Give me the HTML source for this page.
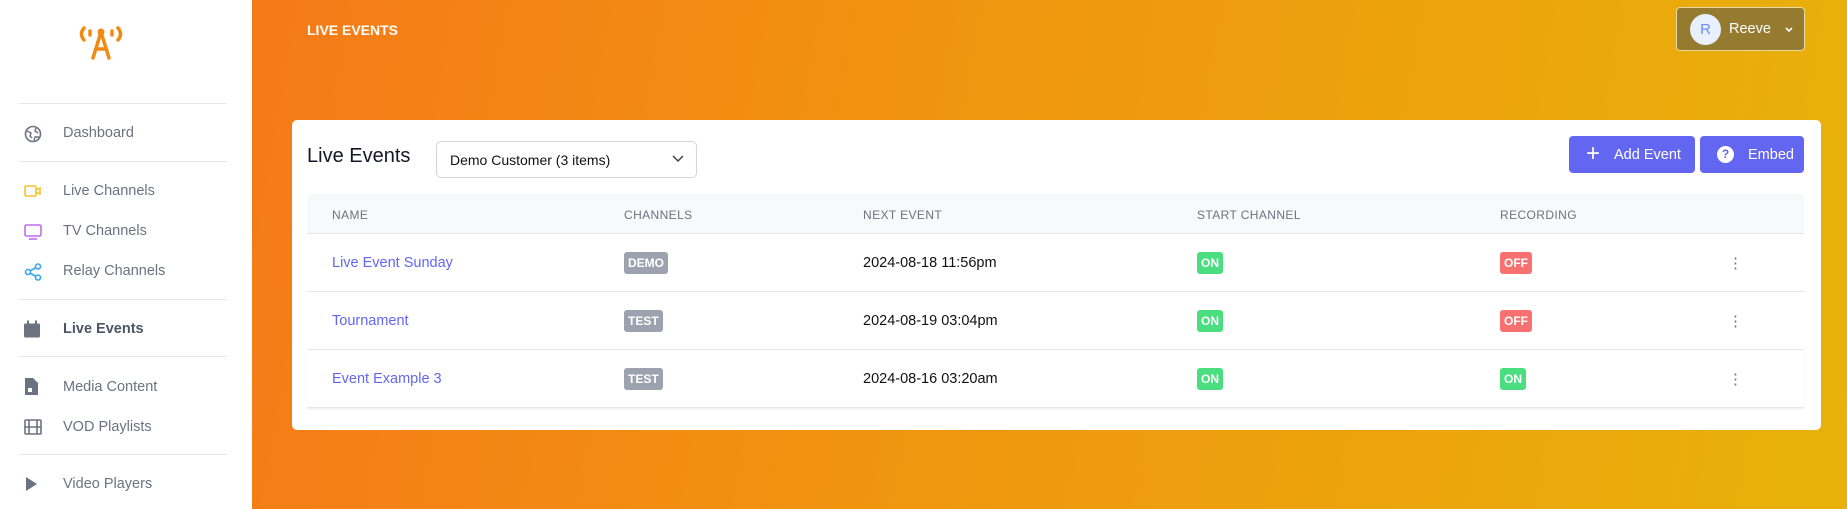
<!DOCTYPE html>
<html><head><meta charset="utf-8"><style>
*{box-sizing:border-box;margin:0;padding:0}
body{width:1847px;height:509px;overflow:hidden;font-family:"Liberation Sans",sans-serif;background:linear-gradient(100deg,#f8701c 0%,#f0950f 50%,#e8b20a 100%);position:relative}
.sb{position:absolute;left:0;top:0;width:252px;height:509px;background:#fff}
.hr{position:absolute;left:19px;width:208px;height:1px;background:#e5e7eb}
.ni{position:absolute;left:63px;font-size:14.5px;color:#6b7280;transform:translateY(-50%)}
.ic{position:absolute;left:24px;transform:translateY(-50%)}
.card{position:absolute;left:292px;top:120px;width:1529px;height:310px;background:#fff;border-radius:5px}
.th{position:absolute;top:74px;height:40px;left:15px;width:1497px;background:#f8f9fa;border-bottom:1px solid #e5e7eb}
.th span{position:absolute;top:14px;font-size:12px;color:#6b7280;letter-spacing:.4px}
.row{position:absolute;left:15px;width:1497px;height:58px;border-bottom:1px solid #e5e7eb}
.row>*{position:absolute;top:50%;transform:translateY(-50%)}
.nm{left:25px;color:#6366f1;font-size:14.5px}
.bd{font-size:12px;color:#fff;padding:4px 4px;border-radius:3px;font-weight:bold}
.dt{left:556px;font-size:14.5px;color:#111}
.btn{position:absolute;top:16px;height:37px;background:#6366f1;border-radius:4px;color:#fff;font-size:14.5px;display:flex;align-items:center}
</style></head><body>
<div class="sb">
<svg style="position:absolute;left:78px;top:24px" width="46" height="36" viewBox="0 0 46 36"><g fill="none" stroke="#f08a12" stroke-width="3.5" stroke-linecap="round"><path d="M6 4Q1 10 6 16"/><path d="M40 4Q45 10 40 16"/><path d="M12 7v4"/><path d="M34 7v4"/><path d="M23 8L15 34M23 8L31 34M18 25h10"/></g><circle cx="23" cy="8" r="3.5" fill="#f08a12"/></svg>
<div class="hr" style="top:103px"></div><div class="hr" style="top:161px"></div><div class="hr" style="top:299px"></div><div class="hr" style="top:356px"></div><div class="hr" style="top:454px"></div>
<svg class="ic" style="top:134px" width="18" height="18" viewBox="0 0 18 18"><circle cx="9" cy="9" r="7.5" fill="none" stroke="#6b7280" stroke-width="1.6"/><path d="M3 6l4 2-1 3 2 2M12 3l-1 3 3 2M10 16l1-4 4 0" fill="none" stroke="#6b7280" stroke-width="1.4"/></svg>
<div class="ni" style="top:133px">Dashboard</div>
<svg class="ic" style="top:191px" width="18" height="14" viewBox="0 0 18 14"><rect x="1" y="2" width="11" height="10" rx="1" fill="none" stroke="#f4c430" stroke-width="1.6"/><path d="M12 6l4-2v6l-4-2" fill="none" stroke="#f4c430" stroke-width="1.6"/></svg>
<div class="ni" style="top:191px">Live Channels</div>
<svg class="ic" style="top:232px" width="18" height="16" viewBox="0 0 18 16"><rect x="1" y="1" width="16" height="11" rx="1.5" fill="none" stroke="#c06af5" stroke-width="1.6"/><path d="M5 15h8" stroke="#c06af5" stroke-width="1.6"/></svg>
<div class="ni" style="top:231px">TV Channels</div>
<svg class="ic" style="top:272px" width="18" height="18" viewBox="0 0 18 18"><g fill="none" stroke="#38a8e8" stroke-width="1.6"><circle cx="4" cy="9" r="2.5"/><circle cx="14" cy="3.5" r="2.5"/><circle cx="14" cy="14.5" r="2.5"/><path d="M6 8l6-3.5M6 10l6 3.5"/></g></svg>
<div class="ni" style="top:271px">Relay Channels</div>
<svg class="ic" style="top:329px" width="16" height="17" viewBox="0 0 16 17"><rect x="0" y="3" width="16" height="14" rx="1.5" fill="#6b7280"/><rect x="3" y="0" width="2" height="4" fill="#6b7280"/><rect x="11" y="0" width="2" height="4" fill="#6b7280"/></svg>
<div class="ni" style="top:329px;font-weight:bold;color:#4b5563">Live Events</div>
<svg class="ic" style="top:387px" width="14" height="18" viewBox="0 0 14 18"><path d="M1 0h8l5 5v12H1z" fill="#6b7280"/><rect x="4" y="10" width="4" height="4" fill="#fff"/></svg>
<div class="ni" style="top:387px">Media Content</div>
<svg class="ic" style="top:427px" width="18" height="16" viewBox="0 0 18 16"><rect x="1" y="1" width="16" height="14" rx="1" fill="none" stroke="#6b7280" stroke-width="1.6"/><path d="M5 1v14M13 1v14M1 8h16" stroke="#6b7280" stroke-width="1.6"/></svg>
<div class="ni" style="top:427px">VOD Playlists</div>
<svg class="ic" style="top:484px" width="14" height="16" viewBox="0 0 14 16"><path d="M2 1l11 7-11 7z" fill="#6b7280"/></svg>
<div class="ni" style="top:484px">Video Players</div>
</div>
<div style="position:absolute;left:307px;top:22px;font-size:14px;font-weight:bold;color:#fff">LIVE EVENTS</div>
<div style="position:absolute;left:1676px;top:7px;width:129px;height:44px;border:1px solid #e8d9a0;border-radius:4px;background:#957b30">
<div style="position:absolute;left:13px;top:6px;width:31px;height:31px;border-radius:50%;background:#e8f0fe;color:#6b8cf0;font-size:15px;text-align:center;line-height:31px">R</div>
<div style="position:absolute;left:52px;top:13px;color:#fff;font-size:14.5px">Reeve</div>
<svg style="position:absolute;left:107px;top:18px" width="10" height="8" viewBox="0 0 10 8"><path d="M2 2l3 3 3-3" fill="none" stroke="#fff" stroke-width="1.6"/></svg>
</div>
<div class="card">
<div style="position:absolute;left:15px;top:25px;font-size:20px;color:#111827">Live Events</div>
<div style="position:absolute;left:144px;top:21px;width:261px;height:37px;border:1px solid #d1d5db;border-radius:5px">
<span style="position:absolute;left:13px;top:10px;font-size:14px;color:#111">Demo Customer (3 items)</span>
<svg style="position:absolute;right:12px;top:13px" width="12" height="8" viewBox="0 0 12 8"><path d="M1 1l5 5 5-5" fill="none" stroke="#444" stroke-width="1.5"/></svg>
</div>
<div class="btn" style="left:1277px;width:126px"><span style="font-size:24px;font-weight:300;margin:0 14px 2px 17px">+</span>Add Event</div>
<div class="btn" style="left:1408px;width:104px"><span style="width:17px;height:17px;border-radius:50%;background:#fff;color:#6366f1;font-size:12px;font-weight:bold;text-align:center;line-height:17px;margin:0 14px 0 17px">?</span>Embed</div>
<div class="th"><span style="left:25px">NAME</span><span style="left:317px">CHANNELS</span><span style="left:556px">NEXT EVENT</span><span style="left:890px">START CHANNEL</span><span style="left:1193px">RECORDING</span></div>
<div class="row" style="top:114px"><span class="nm">Live Event Sunday</span><span class="bd" style="left:317px;background:#9ca3af">DEMO</span><span class="dt">2024-08-18 11:56pm</span><span class="bd" style="left:890px;background:#4ade80">ON</span><span class="bd" style="left:1193px;background:#f87171">OFF</span><span style="left:1421px;color:#6b7280;font-size:15px">⋮</span></div>
<div class="row" style="top:172px"><span class="nm">Tournament</span><span class="bd" style="left:317px;background:#9ca3af">TEST</span><span class="dt">2024-08-19 03:04pm</span><span class="bd" style="left:890px;background:#4ade80">ON</span><span class="bd" style="left:1193px;background:#f87171">OFF</span><span style="left:1421px;color:#6b7280;font-size:15px">⋮</span></div>
<div class="row" style="top:230px;box-shadow:0 1px 2px rgba(0,0,0,.08)"><span class="nm">Event Example 3</span><span class="bd" style="left:317px;background:#9ca3af">TEST</span><span class="dt">2024-08-16 03:20am</span><span class="bd" style="left:890px;background:#4ade80">ON</span><span class="bd" style="left:1193px;background:#4ade80">ON</span><span style="left:1421px;color:#6b7280;font-size:15px">⋮</span></div>
</div>
</body></html>
